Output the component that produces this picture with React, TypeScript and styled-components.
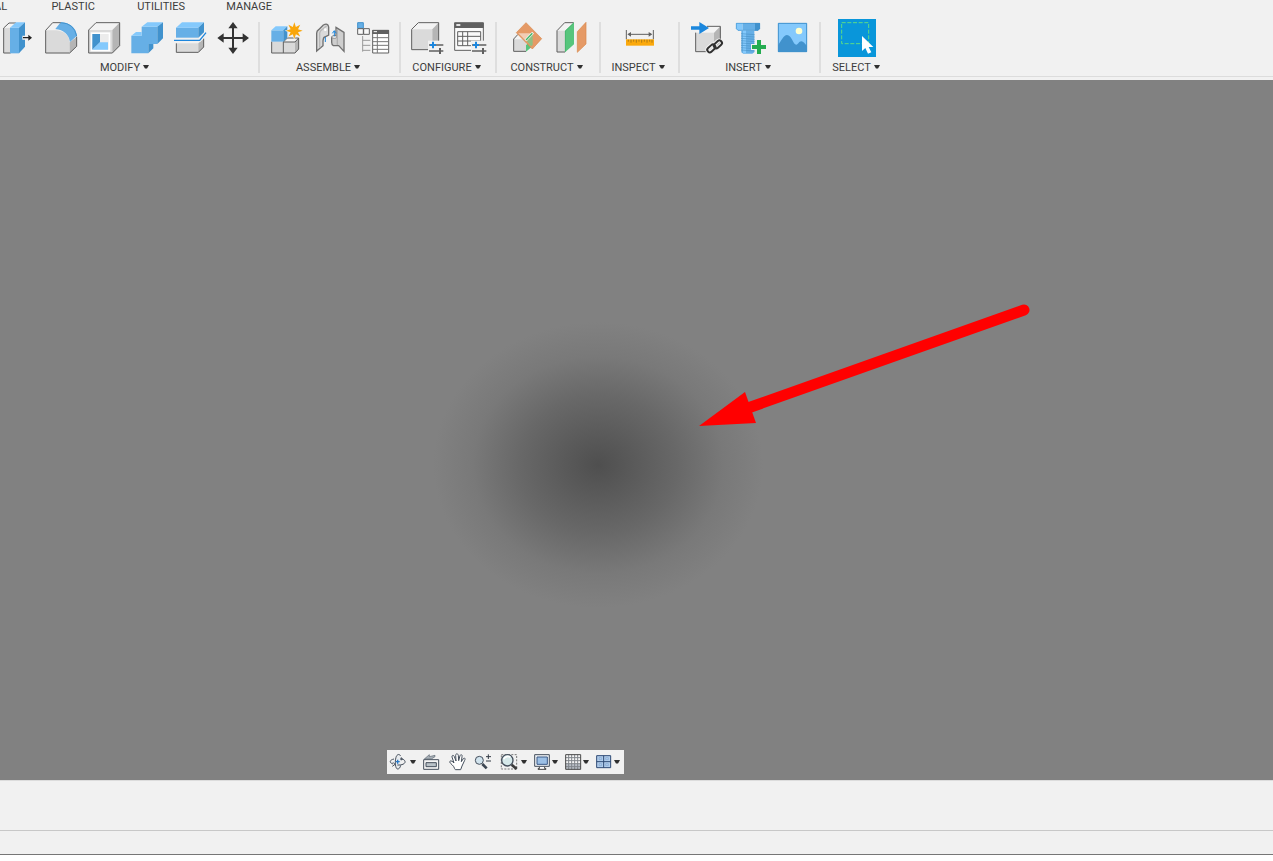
import React from "react";
import styled, { createGlobalStyle } from "styled-components";

const INK = "#606060";
const BLUE = "#66afe6";
const BLUE_LIGHT = "#84c9fc";
const BLUE_DARK = "#4192cd";
const GRAY = "#dadada";
const GRAY_LIGHT = "#f3f3f3";
const GRAY_DARK = "#b5b5b5";
const ORANGE = "#e59a66";
const GREEN = "#57c57c";

const GlobalStyle = createGlobalStyle`
  * { box-sizing: border-box; }
  body {
    margin: 0;
    background: #ffffff;
    font-family: Roboto, "Liberation Sans", sans-serif;
    font-size: 11px;
    color: #3c3c3c;
  }
`;

const Page = styled.div`
  display: flex;
  flex-direction: column;
  min-height: calc(100vh - 6px);
  background: #f1f1f1;
  border-bottom: 1px solid #767676;
  overflow: hidden;
`;

const Header = styled.header`
  flex: none;
  height: 80px;
  overflow: hidden;
`;

const Tabs = styled.nav`
  display: flex;
  height: 12px;
  margin-left: -6px;
`;

const Tab = styled.button<{ $scrolled?: boolean }>`
  flex: none;
  width: ${(p) => (p.$scrolled ? "auto" : "88px")};
  padding: ${(p) => (p.$scrolled ? "1px 22px 0 0" : "1px 0 0")};
  border: 0;
  background: none;
  color: inherit;
  font: inherit;
  line-height: 12px;
  text-align: center;
`;

const Ribbon = styled.div`
  display: flex;
  height: 65px;
  padding-top: 7px;
  margin-left: -6px;
  border-bottom: 1px solid #dcdcdc;
`;

const Group = styled.section<{ $width: number; $last?: boolean }>`
  display: flex;
  flex: none;
  flex-direction: column;
  align-items: center;
  width: ${(p) => p.$width}px;
  height: 54px;
  background: ${(p) =>
    p.$last ? "none" : "linear-gradient(#dedede, #dedede) right bottom / 2px 51px no-repeat"};
  padding-right: ${(p) => (p.$last ? 0 : 2)}px;
`;

const Tools = styled.div`
  display: flex;
`;

const ToolButton = styled.button`
  display: block;
  width: 43px;
  height: 38px;
  padding: 0;
  border: 0;
  background: none;
`;

const ToolIcon = styled.svg`
  display: block;
  width: 43px;
  height: 38px;
`;

const CaretIcon = styled.svg`
  display: block;
  flex: none;
  width: 7px;
  height: 6px;
`;

const GroupMenu = styled.button`
  display: flex;
  align-items: center;
  gap: 3px;
  height: 16px;
  margin-top: 3px;
  padding: 0 2px 0 0;
  border: 0;
  background: none;
  color: inherit;
  font: inherit;
  line-height: 16px;
  white-space: nowrap;

  ${CaretIcon} {
    margin-bottom: 2px;
  }
`;

const Canvas = styled.main`
  position: relative;
  display: flex;
  flex: 1;
  align-items: flex-end;
  min-height: 400px;
  padding: 0 0 6px 387px;
  background: radial-gradient(
      ellipse 165px 143px at 47% 55%,
      #4f4f4f,
      #686868 48%,
      #797979 76%,
      #818181
    )
    #818181;
`;

const Pointer = styled.svg`
  position: absolute;
  left: 698px;
  top: 222px;
  width: 333px;
  height: 126px;
`;

const NavBar = styled.div`
  display: flex;
  gap: 4px;
  height: 24px;
  padding: 0 3px 0 1px;
  background: #f1f1f1;
`;

const NavButton = styled.button<{ $gap?: number; $single?: boolean }>`
  display: flex;
  align-items: center;
  gap: ${(p) => p.$gap ?? 0}px;
  padding: 0 ${(p) => (p.$single ? 1 : 0)}px;
  border: 0;
  background: none;
`;

const NavIcon = styled.svg`
  display: block;
  width: 20px;
  height: 24px;
`;

const Timeline = styled.section`
  flex: none;
  height: 51px;
  border-top: 1px solid #dcdcdc;
  border-bottom: 1px solid #c8c8c8;
`;

const Status = styled.footer`
  flex: none;
  height: 23px;
`;

function Caret() {
  return (
    <CaretIcon viewBox="0 0 7 6" aria-hidden="true">
      <path d="M0 1H6L4 4.5H2Z" fill="#303030" />
    </CaretIcon>
  );
}

/* Drawings use three units per pixel. */
function Tool({ label, children }: { label: string; children: React.ReactNode }) {
  return (
    <ToolButton type="button" aria-label={label}>
      <ToolIcon viewBox="0 0 129 114" fill="none">
        {children}
      </ToolIcon>
    </ToolButton>
  );
}

function ToolGroup(props: {
  name: string;
  width: number;
  last?: boolean;
  children: React.ReactNode;
}) {
  return (
    <Group $width={props.width} $last={props.last}>
      <Tools>{props.children}</Tools>
      <GroupMenu type="button">
        {props.name}
        <Caret />
      </GroupMenu>
    </Group>
  );
}

function Nav(props: {
  label: string;
  menu?: boolean;
  gap?: number;
  children: React.ReactNode;
}) {
  return (
    <NavButton type="button" aria-label={props.label} $gap={props.gap} $single={!props.menu}>
      <NavIcon viewBox="0 0 60 72" fill="none">
        {props.children}
      </NavIcon>
      {props.menu && <Caret />}
    </NavButton>
  );
}

function Sliders() {
  return (
    <g>
      <path d="M69 65H117V105H69Z" fill="#f1f1f1" />
      <path d="M72 78H115M72 96H115" stroke={INK} strokeWidth="5" />
      <path d="M105 87V105" stroke={INK} strokeWidth="6" />
      <path d="M84 68V88M75 78H93" stroke="#1d86dd" strokeWidth="6" />
    </g>
  );
}

function starPoints(cx: number, cy: number, outer: number, inner: number) {
  return Array.from({ length: 16 }, (_, i) => {
    const r = i % 2 ? inner : outer;
    const a = (i * Math.PI) / 8;
    return `${cx + r * Math.sin(a)},${cy - r * Math.cos(a)}`;
  }).join(" ");
}

function ModifyTools() {
  return (
    <>
      <Tool label="Press Pull">
        <path d="M19 26H39V103H19Z" fill={GRAY} />
        <path d="M19 26L35 10H57L39 26Z" fill={GRAY_LIGHT} />
        <path d="M41 102H20V27L36 12H57" stroke={INK} strokeWidth="3" />
        <path d="M39 26H66V103H39Z" fill={BLUE} />
        <path d="M39 26L57 10H84L66 26Z" fill={BLUE_LIGHT} />
        <path d="M66 26L84 10V83L66 103Z" fill={BLUE_DARK} />
        <path d="M76 50H93V44H97L109 56L97 68H93V62H76Z" fill="#f1f1f1" />
        <path d="M78 54H94V47L105 56L94 65V58H78Z" fill="#222" />
      </Tool>
      <Tool label="Fillet">
        <path d="M16 34L38 10H64L46 32Z" fill={GRAY_LIGHT} />
        <path d="M16 34H48Q86 38 89 70V103H16Z" fill={GRAY} />
        <path d="M89 70L111 53V82L89 103Z" fill={GRAY_DARK} />
        <path d="M62 10Q104 12 111 50L90 69Q84 34 46 30Z" fill={BLUE} />
        <path d="M62 11Q102 12 110 51" stroke={BLUE_DARK} strokeWidth="3" />
        <path d="M62 11H38L17 34V102H89L110 82V53" stroke={INK} strokeWidth="3" />
      </Tool>
      <Tool label="Shell">
        <path d="M16 33L39 10H111L88 33Z" fill={GRAY_LIGHT} />
        <path d="M16 33H88V103H16Z" fill={GRAY} />
        <path d="M88 33L111 10V80L88 103Z" fill={GRAY_DARK} />
        <path d="M23 40H82V97H23Z" fill="#fff" />
        <path d="M28 45H77V92H28Z" fill="#ececec" />
        <path d="M28 45H51V70L28 92Z" fill={BLUE_DARK} />
        <path d="M28 92L51 70H75V92Z" fill={BLUE_LIGHT} />
        <path d="M17 102V33L39 11H110V80L88 102Z" stroke={INK} strokeWidth="3" />
      </Tool>
      <Tool label="Combine">
        <path d="M16 50H47V23H94V75H67V103H16Z" fill={BLUE} />
        <path d="M16 50L30 39H47V50ZM47 23L64 10H111L94 23Z" fill={BLUE_LIGHT} />
        <path d="M94 23L111 10V58L94 75ZM67 75H82V88L67 103Z" fill={BLUE_DARK} />
      </Tool>
      <Tool label="Split Body">
        <path d="M21 26H88V56H21Z" fill={BLUE} />
        <path d="M21 26L39 10H105L88 26Z" fill={BLUE_LIGHT} />
        <path d="M88 26L105 10V40L88 56Z" fill={BLUE_DARK} />
        <path d="M21 73H88V101H21Z" fill={GRAY} />
        <path d="M88 73L105 59V84L88 101Z" fill={GRAY_DARK} />
        <path d="M22 73V100H88L104 84V59" stroke={INK} strokeWidth="3" />
        <path d="M15 64H92L111 41" stroke="#f1f1f1" strokeWidth="9" />
        <path d="M15 64H92L111 41" stroke="#1d86dd" strokeWidth="4" />
      </Tool>
      <Tool label="Move">
        <path d="M63 20V94M27 57H100" stroke="#333" strokeWidth="6" />
        <path
          d="M63 9L77 28H49ZM63 105L77 86H49ZM16 57L35 43V71ZM111 57L92 43V71Z"
          fill="#333"
        />
      </Tool>
    </>
  );
}

function AssembleTools() {
  return (
    <>
      <Tool label="New Component">
        <path d="M55 68L67 56H102L90 68Z" fill={GRAY_LIGHT} />
        <path d="M19 68H90V103H19Z" fill={GRAY} />
        <path d="M90 68L102 56V90L90 103Z" fill={GRAY_DARK} />
        <path
          d="M20 68V102H90L101 90V57H67L55 69V102M55 69H90L101 57"
          stroke={INK}
          strokeWidth="3"
        />
        <path d="M19 34H55V68H19Z" fill={BLUE} />
        <path d="M19 34L32 22H67L55 34Z" fill={BLUE_LIGHT} />
        <path d="M55 34L67 22V56L55 68Z" fill={BLUE_DARK} />
        <polygon points={starPoints(88, 35, 29, 14)} fill="#f1f1f1" />
        <polygon points={starPoints(88, 35, 25, 12)} fill="#f9a60a" />
      </Tool>
      <Tool label="Joint">
        <path
          d="M26 43Q26 36 32 32L46 18Q60 11 62 24V48L50 54Q46 55 45 66V80L26 96Z"
          fill={GRAY}
          stroke="#707070"
          strokeWidth="4"
        />
        <path d="M35 86V42Q36 36 42 32L56 20" stroke="#b8b8b8" strokeWidth="4" />
        <circle cx="52" cy="32" r="4" fill="#fff" />
        <path
          d="M84 25L108 40V97L92 80H76Q71 78 71 70V57Q73 50 84 50Z"
          fill="#cecece"
          stroke="#707070"
          strokeWidth="4"
        />
        <ellipse cx="79" cy="54" rx="8" ry="4" fill="#f3f3f3" stroke="#707070" strokeWidth="2" />
        <path d="M88 30V78" stroke="#b0b0b0" strokeWidth="4" />
        <path d="M52 54V69M79 36V52M73 43L79 35L85 43" stroke="#1d86dd" strokeWidth="3" />
      </Tool>
      <Tool label="Bill of Materials">
        <path d="M20 11H37V28H20Z" fill={BLUE} stroke={BLUE_DARK} strokeWidth="3" />
        <path d="M20 29H37V46H20ZM38 29H55V46H38Z" fill="#f8f8f8" stroke={INK} strokeWidth="3" />
        <path d="M35 51V98M35 64H58M35 79H58M35 94H58" stroke="#999" strokeWidth="3" />
        <path d="M65 34H113V102H65Z" fill="#fff" stroke={INK} strokeWidth="3" />
        <path d="M64 33H114V45H64Z" fill={INK} />
        <path d="M68 38H78" stroke="#fff" strokeWidth="3" />
        <path
          d="M79 45V102M65 56H113M65 68H113M65 79H113M65 91H113"
          stroke="#777"
          strokeWidth="3"
        />
      </Tool>
    </>
  );
}

function ConfigureTools() {
  return (
    <>
      <Tool label="Configure Model">
        <path d="M19 31L40 10H102L82 31Z" fill={GRAY_LIGHT} />
        <path d="M19 31H82V93H19Z" fill={GRAY} />
        <path d="M82 31L102 10V73L82 93Z" fill={GRAY_DARK} />
        <path d="M82 92H20V31L40 11H101V73Z" stroke={INK} strokeWidth="3" />
        <Sliders />
      </Tool>
      <Tool label="Configuration Table">
        <path d="M20 12H106V94H20Z" fill="#fafafa" stroke={INK} strokeWidth="3" />
        <path d="M19 10H107V27H19Z" fill={INK} />
        <path d="M25 18H37" stroke="#fff" strokeWidth="5" />
        <path d="M29 38H98V80H29ZM29 52H98M29 66H98M44 38V80M59 38V80" stroke={INK} strokeWidth="3" />
        <Sliders />
      </Tool>
    </>
  );
}

function ConstructTools() {
  return (
    <>
      <Tool label="Offset Plane">
        <path d="M25 61L39 44H70L63 61Z" fill={GRAY_LIGHT} />
        <path d="M25 61H63V98H25Z" fill={GRAY} />
        <path d="M63 98V78L80 62V84Z" fill={GREEN} />
        <path d="M63 97H26V60L39 46" stroke={INK} strokeWidth="3" />
        <path d="M63 11L110 59L82 90L34 41Z" fill={ORANGE} stroke="#d98749" strokeWidth="2" />
        <path d="M40 43H82L63 66Z" fill="#f1cdb5" />
        <path d="M65 66L83 45V78L78 82Z" fill="#91bf82" />
        <path d="M62 64L84 41" stroke="#f5f5f5" strokeWidth="8" />
        <path d="M63 63L82 43" stroke="#3cb765" strokeWidth="4" />
      </Tool>
      <Tool label="Midplane">
        <path d="M26 35L50 10H78L51 35Z" fill={GRAY_LIGHT} />
        <path d="M26 35H51V100H26Z" fill={GRAY} />
        <path d="M51 99H27V35L50 11H77" stroke={INK} strokeWidth="3" />
        <path d="M51 35L78 10V76L51 100Z" fill={GREEN} />
        <path d="M52 98V36L77 12" stroke="#3fae66" strokeWidth="2" />
        <path d="M88 38L114 10V75L88 100Z" fill={ORANGE} stroke="#d98749" strokeWidth="2" />
      </Tool>
    </>
  );
}

function InspectTools() {
  return (
    <Tool label="Measure">
      <path d="M25 33V61M106 33V61M34 46H98" stroke={INK} strokeWidth="3" />
      <path d="M28 46L39 39V53ZM103 46L92 39V53Z" fill={INK} />
      <path d="M24 61H108V80H24Z" fill="#fba90c" />
      <path
        d="M31 62V68M39 62V71M47 62V68M55 62V71M63 62V68M71 62V71M79 62V68M87 62V71M95 62V68M102 62V71"
        stroke="#8a6318"
        strokeWidth="2"
      />
    </Tool>
  );
}

function InsertTools() {
  return (
    <>
      <Tool label="Insert Derive">
        <path d="M31 41L50 21H107L87 41Z" fill={GRAY_LIGHT} />
        <path d="M31 41H87V99H31Z" fill={GRAY} />
        <path d="M87 41L107 21V79L87 99Z" fill={GRAY_DARK} />
        <path d="M75 98H32V41M66 22H106V66" stroke={INK} strokeWidth="3" />
        <path d="M18 22H43V9L72 27L43 45V32H18Z" fill="#1b87dd" />
        <g stroke="#f1f1f1" strokeWidth="12">
          <rect x="66" y="81" width="27" height="15" rx="7" transform="rotate(-42 79 89)" />
          <rect x="85" y="69" width="27" height="15" rx="7" transform="rotate(-42 98 76)" />
        </g>
        <g stroke="#303030" strokeWidth="6">
          <rect x="66" y="81" width="27" height="15" rx="7" transform="rotate(-42 79 89)" />
          <rect x="85" y="69" width="27" height="15" rx="7" transform="rotate(-42 98 76)" />
        </g>
      </Tool>
      <Tool label="Insert Fastener">
        <path d="M24 12H44V35H30L24 29Z" fill={BLUE_LIGHT} />
        <path d="M44 12H81V35H44Z" fill={BLUE} />
        <path d="M81 12H96V29L90 35H81Z" fill={BLUE_DARK} />
        <path d="M25 13H95V29L90 34H30L25 29Z" stroke={BLUE_DARK} strokeWidth="2" />
        <path d="M40 35H79V100L73 104H46L40 100Z" fill={BLUE} />
        <path d="M45 35H54V103H45Z" fill={BLUE_LIGHT} />
        <path
          d="M39 44L80 47M39 51L80 54M39 58L80 61M39 65L80 68M39 72L80 75M39 79L80 82M39 86L80 89M39 93L80 96"
          stroke="#4a94c9"
          strokeWidth="2"
        />
        <path d="M93 60V107M69 84H117" stroke="#f1f1f1" strokeWidth="18" />
        <path d="M93 63V105M72 84H114" stroke="#24ac50" strokeWidth="12" />
      </Tool>
      <Tool label="Canvas">
        <path d="M21 12H108V99H21Z" fill={BLUE_LIGHT} />
        <path
          d="M21 79C31 65 38 48 48 48C62 48 66 77 76 77C82 77 83 67 91 67C98 67 101 75 108 80V99H21Z"
          fill={BLUE_DARK}
        />
        <circle cx="84" cy="36" r="10" fill="#ffffcf" />
        <path d="M22 13H107V98H22Z" stroke={BLUE_DARK} strokeWidth="3" />
      </Tool>
    </>
  );
}

function SelectTools() {
  return (
    <Tool label="Select">
      <path d="M6 0H120V114H6Z" fill="#0996da" />
      <path d="M17 11H98V74H17Z" stroke="#5cdb88" strokeWidth="3" strokeDasharray="12 5" />
      <path d="M78 51V96L88 87L96 104L106 100L98 84H112Z" fill="#fff" />
    </Tool>
  );
}

function NavigationBar() {
  return (
    <NavBar>
      <Nav label="Orbit" menu gap={2}>
        <path
          d="M38 18C34 11 27 12 24 22C20 36 22 57 29 57C34 57 37 52 38 46"
          fill="#e8ebee"
          stroke="#454f5c"
          strokeWidth="3"
        />
        <path
          d="M18 27C4 30 3 38 15 42M28 45C42 46 53 41 51 34C50 30 46 28 42 27"
          stroke="#454f5c"
          strokeWidth="3"
        />
        <path d="M36 27H45M40 22V31M13 49L21 43L15 37" stroke="#454f5c" strokeWidth="3" />
        <path d="M29 29V41M23 35H35" stroke="#2878c6" strokeWidth="4" />
      </Nav>
      <Nav label="Look At">
        <path d="M5 29H50V58H5Z" fill="#f5f5f5" stroke="#454f5c" strokeWidth="3" />
        <path d="M12 38H43V50H12Z" fill="#b9c2c8" stroke="#454f5c" strokeWidth="3" />
        <path d="M7 27L22 14V20L39 16V20L28 27Z" fill="#a8b0b7" stroke="#59636f" strokeWidth="2" />
      </Nav>
      <Nav label="Pan">
        <path
          d="M20 56C17 45 7 42 5 36C6 30 13 33 18 39L12 21C11 15 17 14 19 20L24 33L23 16C23 10 30 10 31 16L32 32L36 17C38 12 44 14 42 20L40 35L46 26C50 22 53 26 50 31L42 48L38 59H22Z"
          fill="#fff"
          stroke="#454f5c"
          strokeWidth="3"
          strokeLinejoin="round"
        />
      </Nav>
      <Nav label="Zoom">
        <path d="M25 42L38 55" stroke="#3c4652" strokeWidth="8" />
        <circle cx="16" cy="31" r="12" fill="#d2e4ee" stroke="#454f5c" strokeWidth="3" />
        <path d="M43 13V27M36 20H51M36 33H51" stroke="#333b45" strokeWidth="3" />
      </Nav>
      <Nav label="Fit" menu gap={2}>
        <path d="M7 14H53V57H7Z" stroke="#777" strokeWidth="3" strokeDasharray="6 4" />
        <path d="M38 44L53 57" stroke="#3a3a3a" strokeWidth="8" />
        <circle cx="25" cy="31" r="17" fill="#d6e9ea" stroke="#454f5c" strokeWidth="4" />
        <path d="M14 28C17 19 29 17 34 22" stroke="#fff" strokeWidth="5" />
      </Nav>
      <Nav label="Display Settings" menu>
        <path d="M22 50V56H18V58H42V56H38V50" fill="#fff" stroke="#454545" strokeWidth="3" />
        <path d="M8 14H52V49H8Z" fill="#eef2f6" stroke="#454f5c" strokeWidth="3" />
        <path d="M15 21H46V43H15Z" fill="#9cc0e6" stroke="#3c5a86" strokeWidth="3" />
      </Nav>
      <Nav label="Grid and Snaps" menu>
        <path d="M8 14H53V58H8Z" fill="#f7f7f7" />
        <path d="M8 42H53V58H8Z" fill="#b8bec6" />
        <path
          d="M17 14V58M26 14V58M35 14V58M44 14V58M8 23H53M8 32H53M8 41H53M8 50H53"
          stroke="#80858b"
          strokeWidth="3"
        />
        <path d="M8 14H53V58H8Z" stroke="#484848" strokeWidth="3" />
      </Nav>
      <Nav label="Viewports" menu>
        <path d="M8 17H50V53H8Z" fill="#b4cfec" stroke="#2e4a75" strokeWidth="3" />
        <path d="M29 17V53M8 35H50" stroke="#2e4a75" strokeWidth="3" />
        <path
          d="M15 23H23V29H15ZM35 23H43V29H35ZM15 41H23V47H15ZM35 41H43V47H35Z"
          stroke="#7fa4d0"
          strokeWidth="2"
        />
      </Nav>
    </NavBar>
  );
}

export default function App() {
  return (
    <Page>
      <GlobalStyle />
      <Header>
        <Tabs>
          <Tab type="button" $scrolled>
            AL
          </Tab>
          <Tab type="button">PLASTIC</Tab>
          <Tab type="button">UTILITIES</Tab>
          <Tab type="button">MANAGE</Tab>
        </Tabs>
        <Ribbon>
          <ToolGroup name="MODIFY" width={266}>
            <ModifyTools />
          </ToolGroup>
          <ToolGroup name="ASSEMBLE" width={141}>
            <AssembleTools />
          </ToolGroup>
          <ToolGroup name="CONFIGURE" width={96}>
            <ConfigureTools />
          </ToolGroup>
          <ToolGroup name="CONSTRUCT" width={104}>
            <ConstructTools />
          </ToolGroup>
          <ToolGroup name="INSPECT" width={79}>
            <InspectTools />
          </ToolGroup>
          <ToolGroup name="INSERT" width={141}>
            <InsertTools />
          </ToolGroup>
          <ToolGroup name="SELECT" width={73} last>
            <SelectTools />
          </ToolGroup>
        </Ribbon>
      </Header>
      <Canvas>
        <Pointer viewBox="0 0 333 126" fill="none" aria-hidden="true">
          <path d="M50 106L326 8" stroke="#ff0000" strokeWidth="11" strokeLinecap="round" />
          <path d="M1 124L47 90L58 121Z" fill="#ff0000" />
        </Pointer>
        <NavigationBar />
      </Canvas>
      <Timeline />
      <Status />
    </Page>
  );
}
